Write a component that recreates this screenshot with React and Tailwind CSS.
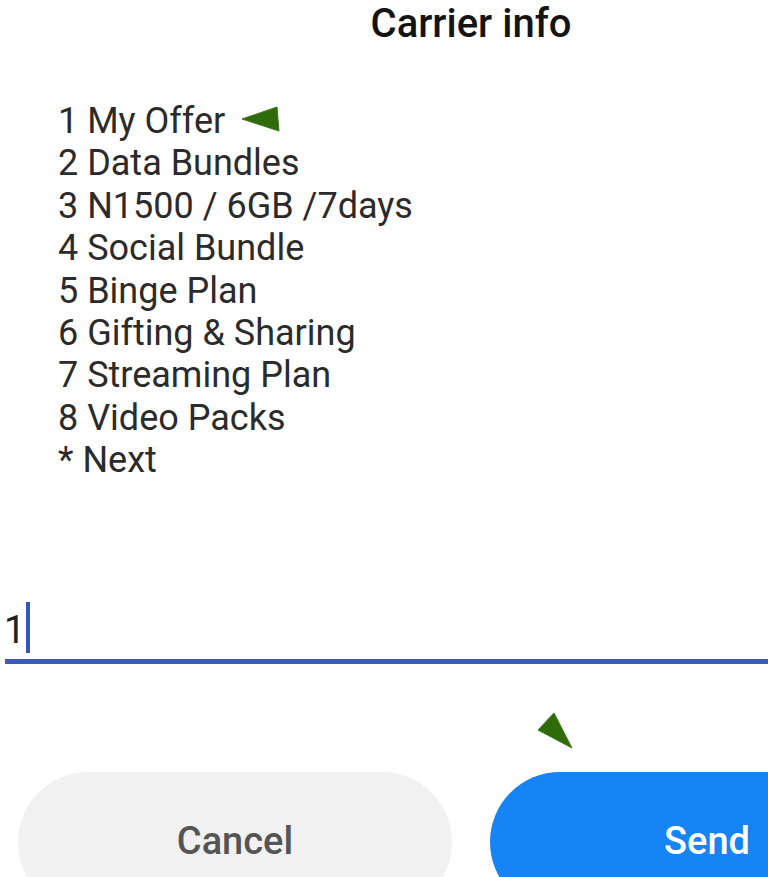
import React from 'react';

const items = [
  '1 My Offer',
  '2 Data Bundles',
  '3 N1500 / 6GB /7days',
  '4 Social Bundle',
  '5 Binge Plan',
  '6 Gifting & Sharing',
  '7 Streaming Plan',
  '8 Video Packs',
  '* Next',
];

function Arrow({ points, className }) {
  return (
    <svg className={className} viewBox="0 0 768 877" width="768" height="877">
      <polygon points={points} fill="#2f6a0b" stroke="#3d7a17" strokeWidth="1" strokeLinejoin="round" />
    </svg>
  );
}

export default function App() {
  return (
    <div className="relative w-[768px] h-[877px] overflow-hidden bg-white font-['Roboto',sans-serif]">
      {/* title */}
      <div className="pl-[174px] text-center text-[40px] leading-[47px] font-medium text-[#141414]">
        Carrier info
      </div>

      {/* menu */}
      <div className="mt-[53px] pl-[58px] text-[36px] leading-[42.4px] text-[#2b2b2b]">
        {items.map((item) => (
          <div key={item}>{item}</div>
        ))}
      </div>

      {/* input */}
      <div className="mt-[120px]">
        <div className="flex items-start h-[51px] pl-[4px]">
          <span className="text-[38px] leading-[56px] text-[#222]">1</span>
          <span className="ml-[1px] w-[4px] h-[51px] bg-[#3558b8]" />
        </div>
        <div className="mt-[6px] ml-[5px] h-[5px] bg-[#3a5cb5]" />
      </div>

      {/* buttons */}
      <div className="mt-[108px] flex gap-[38px] pl-[18px]">
        <button className="shrink-0 w-[434px] h-[140px] rounded-full bg-[#f1f1f1] text-[38px] font-medium text-[#555]">
          Cancel
        </button>
        <button className="shrink-0 w-[434px] h-[140px] rounded-full bg-[#1684f5] text-[38px] font-medium text-white">
          Send
        </button>
      </div>

      {/* annotation arrows */}
      <Arrow className="absolute left-0 top-0 pointer-events-none" points="242,119 277,107 279,131" />
      <Arrow className="absolute left-0 top-0 pointer-events-none" points="538,730 554,713 572,748" />
    </div>
  );
}
